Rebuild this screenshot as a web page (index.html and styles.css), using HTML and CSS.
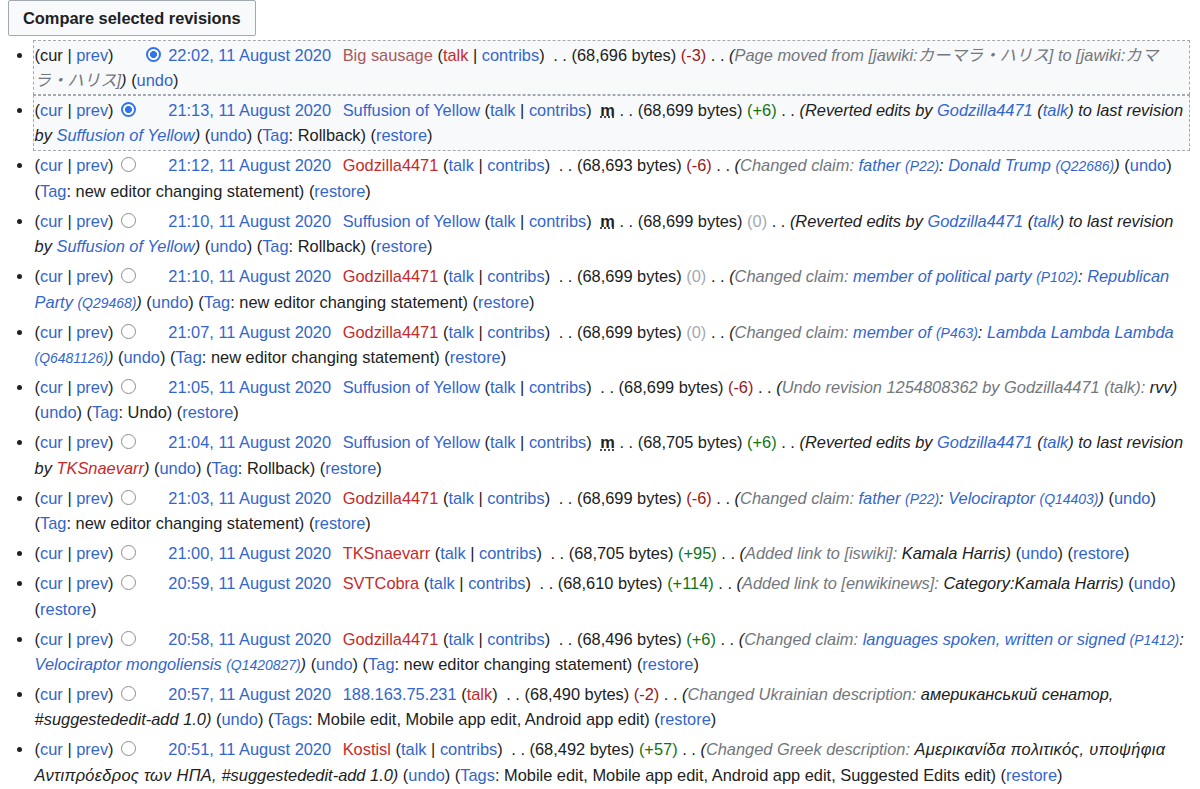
FILE: index.html
```html
<!DOCTYPE html>
<html lang="en">
<head>
<meta charset="utf-8">
<title>Revision history</title>
<link rel="stylesheet" href="styles.css">
</head>
<body>
<form class="history-form">
<button type="button" class="compare">Compare selected revisions</button>
<ul class="history">
<li class="sel"><span class="links">(cur | <a href="#">prev</a>)</span> <input type="radio" name="oldid" class="r hid"> <input type="radio" name="diff" class="r" checked> <a href="#" class="date">22:02, 11 August 2020</a> <span class="user"><a href="#" class="newv">Big sausage</a> <span class="tools">(<a href="#" class="new">talk</a> | <a href="#">contribs</a>)</span></span> <span class="sep">. .</span> <span class="size">(68,696 bytes)</span> <span class="neg">(-3)</span> <span class="sep">. .</span> <span class="comment">(<span class="auto">Page moved from [jawiki:カーマラ・ハリス] to [jawiki:カマラ・ハリス]</span>)</span> <span class="tool">(<a href="#">undo</a>)</span></li>
<li class="sel"><span class="links">(<a href="#">cur</a> | <a href="#">prev</a>)</span> <input type="radio" name="oldid" class="r" checked> <input type="radio" name="diff" class="r hid"> <a href="#" class="date">21:13, 11 August 2020</a> <span class="user"><a href="#">Suffusion of Yellow</a> <span class="tools">(<a href="#">talk</a> | <a href="#">contribs</a>)</span></span> <abbr class="minor">m</abbr> <span class="sep">. .</span> <span class="size">(68,699 bytes)</span> <span class="pos">(+6)</span> <span class="sep">. .</span> <span class="comment">(Reverted edits by <a href="#">Godzilla4471</a> (<a href="#">talk</a>) to last revision by <a href="#">Suffusion of Yellow</a>)</span> <span class="tool">(<a href="#">undo</a>)</span> <span class="tool">(<a href="#">Tag</a>: Rollback)</span> <span class="tool">(<a href="#">restore</a>)</span></li>
<li><span class="links">(<a href="#">cur</a> | <a href="#">prev</a>)</span> <input type="radio" name="oldid" class="r"> <input type="radio" name="diff" class="r hid"> <a href="#" class="date">21:12, 11 August 2020</a> <span class="user"><a href="#" class="new">Godzilla4471</a> <span class="tools">(<a href="#">talk</a> | <a href="#">contribs</a>)</span></span> <span class="sep">. .</span> <span class="size">(68,693 bytes)</span> <span class="neg">(-6)</span> <span class="sep">. .</span> <span class="comment">(<span class="auto">Changed claim:</span> <a href="#">father <span class="qid">(P22)</span></a>: <a href="#">Donald Trump <span class="qid">(Q22686)</span></a>)</span> <span class="tool">(<a href="#">undo</a>)</span> <span class="tool">(<a href="#">Tag</a>: new editor changing statement)</span> <span class="tool">(<a href="#">restore</a>)</span></li>
<li><span class="links">(<a href="#">cur</a> | <a href="#">prev</a>)</span> <input type="radio" name="oldid" class="r"> <input type="radio" name="diff" class="r hid"> <a href="#" class="date">21:10, 11 August 2020</a> <span class="user"><a href="#">Suffusion of Yellow</a> <span class="tools">(<a href="#">talk</a> | <a href="#">contribs</a>)</span></span> <abbr class="minor">m</abbr> <span class="sep">. .</span> <span class="size">(68,699 bytes)</span> <span class="zero">(0)</span> <span class="sep">. .</span> <span class="comment">(Reverted edits by <a href="#">Godzilla4471</a> (<a href="#">talk</a>) to last revision by <a href="#">Suffusion of Yellow</a>)</span> <span class="tool">(<a href="#">undo</a>)</span> <span class="tool">(<a href="#">Tag</a>: Rollback)</span> <span class="tool">(<a href="#">restore</a>)</span></li>
<li><span class="links">(<a href="#">cur</a> | <a href="#">prev</a>)</span> <input type="radio" name="oldid" class="r"> <input type="radio" name="diff" class="r hid"> <a href="#" class="date">21:10, 11 August 2020</a> <span class="user"><a href="#" class="new">Godzilla4471</a> <span class="tools">(<a href="#">talk</a> | <a href="#">contribs</a>)</span></span> <span class="sep">. .</span> <span class="size">(68,699 bytes)</span> <span class="zero">(0)</span> <span class="sep">. .</span> <span class="comment">(<span class="auto">Changed claim:</span> <a href="#">member of political party <span class="qid">(P102)</span></a>: <a href="#">Republican Party <span class="qid">(Q29468)</span></a>)</span> <span class="tool">(<a href="#">undo</a>)</span> <span class="tool">(<a href="#">Tag</a>: new editor changing statement)</span> <span class="tool">(<a href="#">restore</a>)</span></li>
<li><span class="links">(<a href="#">cur</a> | <a href="#">prev</a>)</span> <input type="radio" name="oldid" class="r"> <input type="radio" name="diff" class="r hid"> <a href="#" class="date">21:07, 11 August 2020</a> <span class="user"><a href="#" class="new">Godzilla4471</a> <span class="tools">(<a href="#">talk</a> | <a href="#">contribs</a>)</span></span> <span class="sep">. .</span> <span class="size">(68,699 bytes)</span> <span class="zero">(0)</span> <span class="sep">. .</span> <span class="comment">(<span class="auto">Changed claim:</span> <a href="#">member of <span class="qid">(P463)</span></a>: <a href="#">Lambda Lambda Lambda <span class="qid">(Q6481126)</span></a>)</span> <span class="tool">(<a href="#">undo</a>)</span> <span class="tool">(<a href="#">Tag</a>: new editor changing statement)</span> <span class="tool">(<a href="#">restore</a>)</span></li>
<li><span class="links">(<a href="#">cur</a> | <a href="#">prev</a>)</span> <input type="radio" name="oldid" class="r"> <input type="radio" name="diff" class="r hid"> <a href="#" class="date">21:05, 11 August 2020</a> <span class="user"><a href="#">Suffusion of Yellow</a> <span class="tools">(<a href="#">talk</a> | <a href="#">contribs</a>)</span></span> <span class="sep">. .</span> <span class="size">(68,699 bytes)</span> <span class="neg">(-6)</span> <span class="sep">. .</span> <span class="comment">(<span class="auto">Undo revision 1254808362 by Godzilla4471 (talk):</span> rvv)</span> <span class="tool">(<a href="#">undo</a>)</span> <span class="tool">(<a href="#">Tag</a>: Undo)</span> <span class="tool">(<a href="#">restore</a>)</span></li>
<li><span class="links">(<a href="#">cur</a> | <a href="#">prev</a>)</span> <input type="radio" name="oldid" class="r"> <input type="radio" name="diff" class="r hid"> <a href="#" class="date">21:04, 11 August 2020</a> <span class="user"><a href="#">Suffusion of Yellow</a> <span class="tools">(<a href="#">talk</a> | <a href="#">contribs</a>)</span></span> <abbr class="minor">m</abbr> <span class="sep">. .</span> <span class="size">(68,705 bytes)</span> <span class="pos">(+6)</span> <span class="sep">. .</span> <span class="comment">(Reverted edits by <a href="#">Godzilla4471</a> (<a href="#">talk</a>) to last revision by <a href="#" class="new">TKSnaevarr</a>)</span> <span class="tool">(<a href="#">undo</a>)</span> <span class="tool">(<a href="#">Tag</a>: Rollback)</span> <span class="tool">(<a href="#">restore</a>)</span></li>
<li><span class="links">(<a href="#">cur</a> | <a href="#">prev</a>)</span> <input type="radio" name="oldid" class="r"> <input type="radio" name="diff" class="r hid"> <a href="#" class="date">21:03, 11 August 2020</a> <span class="user"><a href="#" class="new">Godzilla4471</a> <span class="tools">(<a href="#">talk</a> | <a href="#">contribs</a>)</span></span> <span class="sep">. .</span> <span class="size">(68,699 bytes)</span> <span class="neg">(-6)</span> <span class="sep">. .</span> <span class="comment">(<span class="auto">Changed claim:</span> <a href="#">father <span class="qid">(P22)</span></a>: <a href="#">Velociraptor <span class="qid">(Q14403)</span></a>)</span> <span class="tool">(<a href="#">undo</a>)</span> <span class="tool">(<a href="#">Tag</a>: new editor changing statement)</span> <span class="tool">(<a href="#">restore</a>)</span></li>
<li><span class="links">(<a href="#">cur</a> | <a href="#">prev</a>)</span> <input type="radio" name="oldid" class="r"> <input type="radio" name="diff" class="r hid"> <a href="#" class="date">21:00, 11 August 2020</a> <span class="user"><a href="#" class="new">TKSnaevarr</a> <span class="tools">(<a href="#">talk</a> | <a href="#">contribs</a>)</span></span> <span class="sep">. .</span> <span class="size">(68,705 bytes)</span> <span class="pos">(+95)</span> <span class="sep">. .</span> <span class="comment">(<span class="auto">Added link to [iswiki]:</span> Kamala Harris)</span> <span class="tool">(<a href="#">undo</a>)</span> <span class="tool">(<a href="#">restore</a>)</span></li>
<li><span class="links">(<a href="#">cur</a> | <a href="#">prev</a>)</span> <input type="radio" name="oldid" class="r"> <input type="radio" name="diff" class="r hid"> <a href="#" class="date">20:59, 11 August 2020</a> <span class="user"><a href="#" class="new">SVTCobra</a> <span class="tools">(<a href="#">talk</a> | <a href="#">contribs</a>)</span></span> <span class="sep">. .</span> <span class="size">(68,610 bytes)</span> <span class="pos">(+114)</span> <span class="sep">. .</span> <span class="comment">(<span class="auto">Added link to [enwikinews]:</span> Category:Kamala Harris)</span> <span class="tool">(<a href="#">undo</a>)</span> <span class="tool">(<a href="#">restore</a>)</span></li>
<li><span class="links">(<a href="#">cur</a> | <a href="#">prev</a>)</span> <input type="radio" name="oldid" class="r"> <input type="radio" name="diff" class="r hid"> <a href="#" class="date">20:58, 11 August 2020</a> <span class="user"><a href="#" class="new">Godzilla4471</a> <span class="tools">(<a href="#">talk</a> | <a href="#">contribs</a>)</span></span> <span class="sep">. .</span> <span class="size">(68,496 bytes)</span> <span class="pos">(+6)</span> <span class="sep">. .</span> <span class="comment">(<span class="auto">Changed claim:</span> <a href="#">languages spoken, written or signed <span class="qid">(P1412)</span></a>: <a href="#">Velociraptor mongoliensis <span class="qid">(Q1420827)</span></a>)</span> <span class="tool">(<a href="#">undo</a>)</span> <span class="tool">(<a href="#">Tag</a>: new editor changing statement)</span> <span class="tool">(<a href="#">restore</a>)</span></li>
<li><span class="links">(<a href="#">cur</a> | <a href="#">prev</a>)</span> <input type="radio" name="oldid" class="r"> <input type="radio" name="diff" class="r hid"> <a href="#" class="date">20:57, 11 August 2020</a> <span class="user"><a href="#">188.163.75.231</a> <span class="tools">(<a href="#" class="new">talk</a>)</span></span> <span class="sep">. .</span> <span class="size">(68,490 bytes)</span> <span class="neg">(-2)</span> <span class="sep">. .</span> <span class="comment">(<span class="auto">Changed Ukrainian description:</span> американський сенатор, #suggestededit-add 1.0)</span> <span class="tool">(<a href="#">undo</a>)</span> <span class="tool">(<a href="#">Tags</a>: Mobile edit, Mobile app edit, Android app edit)</span> <span class="tool">(<a href="#">restore</a>)</span></li>
<li><span class="links">(<a href="#">cur</a> | <a href="#">prev</a>)</span> <input type="radio" name="oldid" class="r"> <input type="radio" name="diff" class="r hid"> <a href="#" class="date">20:51, 11 August 2020</a> <span class="user"><a href="#" class="new">Kostisl</a> <span class="tools">(<a href="#">talk</a> | <a href="#">contribs</a>)</span></span> <span class="sep">. .</span> <span class="size">(68,492 bytes)</span> <span class="pos">(+57)</span> <span class="sep">. .</span> <span class="comment">(<span class="auto">Changed Greek description:</span> <span class="greek">Αμερικανίδα πολιτικός, υποψήφια Αντιπρόεδρος των ΗΠΑ,</span> #suggestededit-add 1.0)</span> <span class="tool">(<a href="#">undo</a>)</span> <span class="tool">(<a href="#">Tags</a>: Mobile edit, Mobile app edit, Android app edit, Suggested Edits edit)</span> <span class="tool">(<a href="#">restore</a>)</span></li>
</ul>
</form>
</body>
</html>
```
FILE: styles.css
```css
html, body {
  background: #ffffff;
}
body {
  margin: 0 8px;
  font-family: "Liberation Sans", Arial, "Noto Sans CJK JP", sans-serif;
  font-size: 16.4px;
  color: #202122;
}
.history-form {
  margin: 0;
}
.compare {
  display: block;
  margin: 0;
  height: 36px;
  padding: 0 14px;
  font-family: "Liberation Sans", Arial, sans-serif;
  font-size: 16.4px;
  font-weight: bold;
  color: #202122;
  background: #f8f9fa;
  border: 1px solid #a2a9b1;
  border-radius: 2px;
}
.history {
  margin: 4.5px 3px 0 25.6px;
  padding: 0;
  list-style: disc;
  line-height: 25.4px;
}
.history li {
  border: 1px solid transparent;
  padding-top: 1px;
  margin-bottom: 1.6px;
}
.history li.sel {
  background: #f8f9fa;
  outline: 1px dashed #a2a9b1;
}
a {
  color: #3366cc;
  text-decoration: none;
}
a.new {
  color: #c62a2a;
}
a.newv {
  color: #a85a5a;
}
.r {
  -webkit-appearance: none;
  appearance: none;
  box-sizing: border-box;
  width: 15px;
  height: 15px;
  margin: 0 2.5px 0 3px;
  border: 1px solid #8d8d8d;
  border-radius: 50%;
  background: #ffffff;
  vertical-align: -1px;
}
.r:checked {
  border: 2px solid #2f76ee;
  background: radial-gradient(circle, #2f76ee 0, #2f76ee 3.2px, #ffffff 3.8px);
}
.r.hid {
  visibility: hidden;
}
.user {
  margin-left: 7px;
}
.tools {
  margin-right: 4px;
}
.minor {
  font-weight: bold;
  text-decoration: underline dotted;
}
.pos {
  color: #137313;
}
.neg {
  color: #981818;
}
.zero {
  color: #a2a9b1;
}
.comment {
  font-style: italic;
}
.auto {
  color: #72777d;
}
.greek {
  letter-spacing: 0.3px;
}
.qid {
  font-size: 0.85em;
  line-height: 1;
}
```
